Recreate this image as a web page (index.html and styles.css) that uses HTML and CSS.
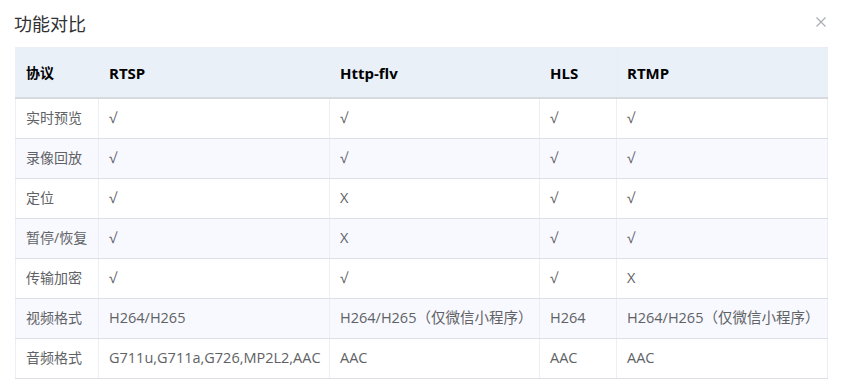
FILE: index.html
```html
<!DOCTYPE html>
<html lang="zh-CN">
<head>
<meta charset="utf-8">
<title>功能对比</title>
<link rel="stylesheet" href="styles.css">
</head>
<body>
<div class="dialog">
  <div class="dialog-header">
    <span class="dialog-title">功能对比</span>
    <button class="dialog-close" aria-label="关闭">
      <svg width="10" height="10" viewBox="0 0 10 10"><path d="M0.5 0.5 L9.5 9.5 M9.5 0.5 L0.5 9.5" stroke="#a8abb2" stroke-width="1.1" fill="none"/></svg>
    </button>
  </div>
  <table class="compare">
    <colgroup>
      <col class="c1"><col class="c2"><col class="c3"><col class="c4"><col class="c5">
    </colgroup>
    <thead>
      <tr><th>协议</th><th>RTSP</th><th>Http-flv</th><th>HLS</th><th>RTMP</th></tr>
    </thead>
    <tbody>
      <tr><td>实时预览</td><td>√</td><td>√</td><td>√</td><td>√</td></tr>
      <tr><td>录像回放</td><td>√</td><td>√</td><td>√</td><td>√</td></tr>
      <tr><td>定位</td><td>√</td><td>X</td><td>√</td><td>√</td></tr>
      <tr><td>暂停/恢复</td><td>√</td><td>X</td><td>√</td><td>√</td></tr>
      <tr><td>传输加密</td><td>√</td><td>√</td><td>√</td><td>X</td></tr>
      <tr><td>视频格式</td><td>H264/H265</td><td>H264/H265（仅微信小程序）</td><td>H264</td><td>H264/H265（仅微信小程序）</td></tr>
      <tr><td>音频格式</td><td>G711u,G711a,G726,MP2L2,AAC</td><td>AAC</td><td>AAC</td><td>AAC</td></tr>
    </tbody>
  </table>
</div>
</body>
</html>
```
FILE: styles.css
```css
html, body {
  margin: 0;
  padding: 0;
  background: #ffffff;
}
body {
  font-family: "Open Sans", "Noto Sans CJK SC", sans-serif;
  font-size: 14px;
  color: #606266;
}
.dialog {
  width: 843px;
  padding: 0 16px 0 15px;
  box-sizing: border-box;
}
.dialog-header {
  height: 47px;
  display: flex;
  align-items: center;
  justify-content: space-between;
}
.dialog-title {
  font-size: 18px;
  color: #303133;
  margin-left: -1px;
  margin-top: -1px;
}
.dialog-close {
  border: 0;
  background: none;
  padding: 0;
  width: 10px;
  height: 10px;
  margin-right: 1px;
  margin-top: -3px;
  display: flex;
  cursor: pointer;
}
.compare {
  width: 812px;
  border-collapse: collapse;
  table-layout: fixed;
  border: 1px solid #ebeef5;
}
.c1 { width: 83px; }
.c2 { width: 231px; }
.c3 { width: 210px; }
.c4 { width: 77px; }
.c5 { width: 211px; }
.compare th,
.compare td {
  text-align: left;
  padding: 0 10px;
  border-left: 1px solid #ebeef5;
  border-right: 1px solid #ebeef5;
  border-bottom: 1px solid #dcdfe6;
  white-space: nowrap;
  line-height: 20px;
}
.compare th {
  height: 49px;
  background: #e9f0f8;
  color: #000000;
  font-weight: 700;
  font-size: 15px;
  border-bottom: 2px solid #d6d9de;
}
.compare th:first-child {
  font-size: 14px;
}
.compare td {
  height: 37px;
  font-size: 14.5px;
  padding-bottom: 2px;
}
.compare td:first-child {
  font-size: 14px;
}
.compare tbody tr:nth-child(even) td {
  background: #f8f9fe;
}
```
